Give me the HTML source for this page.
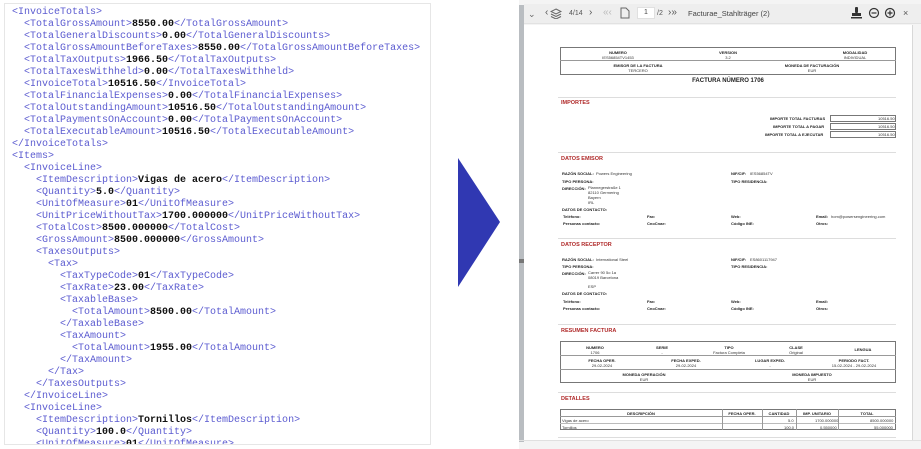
<!DOCTYPE html>
<html><head><meta charset="utf-8"><style>
*{margin:0;padding:0;box-sizing:border-box}
body{width:921px;height:449px;overflow:hidden;background:#fff;position:relative;font-family:"Liberation Sans",sans-serif}
#xml{position:absolute;left:4px;top:3px;width:427px;height:442px;border:1px solid #e6e6e6;overflow:hidden;background:#fff}
#xml pre{position:absolute;left:7px;top:3px;font-family:"Liberation Mono",monospace;font-size:10px;line-height:12px;color:#5b5bd0}
#xml b{color:#111;font-weight:bold}
.a{position:absolute}
.t{position:absolute;font-size:4px;color:#333;white-space:nowrap;line-height:5px}
.l{font-weight:bold;color:#222}
.h{position:absolute;font-size:5.5px;font-weight:bold;color:#b02a2a;left:561px}
.hr{position:absolute;left:558px;width:338px;height:1px;background:#ddd}
.c{text-align:center;transform:translateX(-50%)}
</style></head><body>
<div id="xml"><pre>&lt;InvoiceTotals&gt;
  &lt;TotalGrossAmount&gt;<b>8550.00</b>&lt;/TotalGrossAmount&gt;
  &lt;TotalGeneralDiscounts&gt;<b>0.00</b>&lt;/TotalGeneralDiscounts&gt;
  &lt;TotalGrossAmountBeforeTaxes&gt;<b>8550.00</b>&lt;/TotalGrossAmountBeforeTaxes&gt;
  &lt;TotalTaxOutputs&gt;<b>1966.50</b>&lt;/TotalTaxOutputs&gt;
  &lt;TotalTaxesWithheld&gt;<b>0.00</b>&lt;/TotalTaxesWithheld&gt;
  &lt;InvoiceTotal&gt;<b>10516.50</b>&lt;/InvoiceTotal&gt;
  &lt;TotalFinancialExpenses&gt;<b>0.00</b>&lt;/TotalFinancialExpenses&gt;
  &lt;TotalOutstandingAmount&gt;<b>10516.50</b>&lt;/TotalOutstandingAmount&gt;
  &lt;TotalPaymentsOnAccount&gt;<b>0.00</b>&lt;/TotalPaymentsOnAccount&gt;
  &lt;TotalExecutableAmount&gt;<b>10516.50</b>&lt;/TotalExecutableAmount&gt;
&lt;/InvoiceTotals&gt;
&lt;Items&gt;
  &lt;InvoiceLine&gt;
    &lt;ItemDescription&gt;<b>Vigas de acero</b>&lt;/ItemDescription&gt;
    &lt;Quantity&gt;<b>5.0</b>&lt;/Quantity&gt;
    &lt;UnitOfMeasure&gt;<b>01</b>&lt;/UnitOfMeasure&gt;
    &lt;UnitPriceWithoutTax&gt;<b>1700.000000</b>&lt;/UnitPriceWithoutTax&gt;
    &lt;TotalCost&gt;<b>8500.000000</b>&lt;/TotalCost&gt;
    &lt;GrossAmount&gt;<b>8500.000000</b>&lt;/GrossAmount&gt;
    &lt;TaxesOutputs&gt;
      &lt;Tax&gt;
        &lt;TaxTypeCode&gt;<b>01</b>&lt;/TaxTypeCode&gt;
        &lt;TaxRate&gt;<b>23.00</b>&lt;/TaxRate&gt;
        &lt;TaxableBase&gt;
          &lt;TotalAmount&gt;<b>8500.00</b>&lt;/TotalAmount&gt;
        &lt;/TaxableBase&gt;
        &lt;TaxAmount&gt;
          &lt;TotalAmount&gt;<b>1955.00</b>&lt;/TotalAmount&gt;
        &lt;/TaxAmount&gt;
      &lt;/Tax&gt;
    &lt;/TaxesOutputs&gt;
  &lt;/InvoiceLine&gt;
  &lt;InvoiceLine&gt;
    &lt;ItemDescription&gt;<b>Tornillos</b>&lt;/ItemDescription&gt;
    &lt;Quantity&gt;<b>100.0</b>&lt;/Quantity&gt;
    &lt;UnitOfMeasure&gt;<b>01</b>&lt;/UnitOfMeasure&gt;
</pre></div>

<svg class="a" style="left:456px;top:156px" width="46" height="133"><polygon points="2,2 44,66 2,131" fill="#3038b2"/></svg>

<!-- viewer -->
<div class="a" style="left:519px;top:0;width:402px;height:449px;background:#f4f4f4"></div>
<div class="a" style="left:519px;top:5px;width:5px;height:437px;background:#b9bdc1"></div>
<div class="a" style="left:524px;top:4px;width:397px;height:20px;background:#eeeeee;border-bottom:1px solid #e2e2e2"></div>
<div class="a" style="left:524px;top:25px;width:388px;height:415px;background:#fff"></div>
<div class="a" style="left:912px;top:25px;width:1px;height:415px;background:#d8d8d8"></div>
<div class="a" style="left:519px;top:440px;width:402px;height:1px;background:#e0e0e0"></div>
<div class="a" style="left:519px;top:259px;width:5px;height:4px;background:#777"></div>
<div class="t" style="left:528px;top:9px;font-size:9px;line-height:10px;color:#666">⌄</div>
<div class="t" style="left:545px;top:8px;font-size:10px;line-height:10px;color:#555">‹</div>
<svg class="a" style="left:550px;top:8px" width="12" height="11"><g fill="none" stroke="#666" stroke-width="1"><path d="M6 1L11 3.5 6 6 1 3.5Z"/><path d="M1 6l5 2.5 5-2.5M1 8.5l5 2.5 5-2.5"/></g></svg>
<div class="t" style="left:569px;top:10px;font-size:7px;line-height:8px;color:#555">4/14</div>
<div class="t" style="left:589px;top:8px;font-size:10px;line-height:10px;color:#555">›</div>
<div class="t" style="left:603px;top:8px;font-size:10px;line-height:10px;color:#bbb">«‹</div>
<svg class="a" style="left:620px;top:7px" width="10" height="12"><path d="M1 1h5l3 3v7H1Z" fill="none" stroke="#666"/></svg>
<div class="a" style="left:637px;top:7px;width:18px;height:12px;background:#fff;border:1px solid #e0e0e0;font-size:7px;text-align:center;line-height:10px;color:#444">1</div>
<div class="t" style="left:657px;top:10px;font-size:7px;line-height:8px;color:#555">/2</div>
<div class="t" style="left:668px;top:8px;font-size:10px;line-height:10px;color:#555">›»</div>
<div class="t" style="left:688px;top:9px;font-size:7.5px;line-height:9px;color:#444">Facturae_Stahlträger (2)</div>
<svg class="a" style="left:850px;top:6px" width="14" height="14"><g fill="#333"><rect x="5" y="1" width="3" height="6" rx="1"/><rect x="2" y="7" width="9" height="3"/><rect x="1" y="11" width="11" height="1.5"/></g></svg>
<svg class="a" style="left:868px;top:7px" width="12" height="12"><circle cx="6" cy="6" r="4.5" fill="none" stroke="#333" stroke-width="1.2"/><path d="M3.5 6h5" stroke="#333" stroke-width="1.2"/></svg>
<svg class="a" style="left:884px;top:7px" width="12" height="12"><circle cx="6" cy="6" r="4.5" fill="none" stroke="#333" stroke-width="1.2"/><path d="M3.5 6h5M6 3.5v5" stroke="#333" stroke-width="1.2"/></svg>
<div class="t" style="left:903px;top:8px;font-size:9px;line-height:10px;color:#555">×</div>

<!-- page content -->
<div class="a" style="left:560px;top:47px;width:336px;height:28px;border:1px solid #777"></div>
<div class="a" style="left:560px;top:60px;width:336px;height:1px;background:#999"></div>
<div class="t l c" style="left:618px;top:50px">NUMERO</div><div class="t c" style="left:618px;top:55px">IES56854TV1453</div>
<div class="t l c" style="left:728px;top:50px">VERSION</div><div class="t c" style="left:728px;top:55px">3.2</div>
<div class="t l c" style="left:855px;top:50px">MODALIDAD</div><div class="t c" style="left:855px;top:55px">INDIVIDUAL</div>
<div class="t l c" style="left:638px;top:63px">EMISOR DE LA FACTURA</div><div class="t c" style="left:638px;top:68px">TERCERO</div>
<div class="t l c" style="left:812px;top:63px">MONEDA DE FACTURACIÓN</div><div class="t c" style="left:812px;top:68px">EUR</div>
<div class="t l c" style="left:728px;top:78px;font-size:6px;line-height:7px">FACTURA NÚMERO 1706</div>
<div class="hr" style="top:97px"></div>
<div class="h" style="top:100px">IMPORTES</div>
<div class="t l" style="left:770px;top:116px">IMPORTE TOTAL FACTURAS</div>
<div class="t l" style="left:773px;top:124px">IMPORTE TOTAL A PAGAR</div>
<div class="t l" style="left:765px;top:132px">IMPORTE TOTAL A EJECUTAR</div>
<div class="a" style="left:830px;top:115px;width:66px;height:7px;border:1px solid #777"></div>
<div class="a" style="left:830px;top:123px;width:66px;height:7px;border:1px solid #777"></div>
<div class="a" style="left:830px;top:131px;width:66px;height:7px;border:1px solid #777"></div>
<div class="t" style="left:878px;top:116px">10516.50</div><div class="t" style="left:878px;top:124px">10516.50</div><div class="t" style="left:878px;top:132px">10516.50</div>

<div class="hr" style="top:152px"></div>
<div class="h" style="top:156px">DATOS EMISOR</div>
<div class="t l" style="left:562px;top:171px">RAZÓN SOCIAL:</div><div class="t" style="left:596px;top:171px">Powers Engineering</div>
<div class="t l" style="left:731px;top:171px">NIF/CIF:</div><div class="t" style="left:750px;top:171px">IES56854TV</div>
<div class="t l" style="left:562px;top:179px">TIPO PERSONA:</div><div class="t l" style="left:731px;top:179px">TIPO RESIDENCIA:</div>
<div class="t l" style="left:562px;top:186px">DIRECCIÓN:</div>
<div class="t" style="left:588px;top:185px">Plannegerstraße 1<br>82110 Germering<br>Bayern<br>IRL</div>
<div class="t l" style="left:562px;top:207px">DATOS DE CONTACTO:</div>
<div class="t l" style="left:563px;top:214px">Teléfono:</div><div class="t l" style="left:647px;top:214px">Fax:</div><div class="t l" style="left:731px;top:214px">Web:</div><div class="t l" style="left:816px;top:214px">Email:</div><div class="t" style="left:831px;top:214px">hom@powersengineering.com</div>
<div class="t l" style="left:563px;top:221px">Personas contacto:</div><div class="t l" style="left:647px;top:221px">CnoCnae:</div><div class="t l" style="left:731px;top:221px">Código INE:</div><div class="t l" style="left:816px;top:221px">Otros:</div>

<div class="hr" style="top:238px"></div>
<div class="h" style="top:242px">DATOS RECEPTOR</div>
<div class="t l" style="left:562px;top:257px">RAZÓN SOCIAL:</div><div class="t" style="left:596px;top:257px">International Steel</div>
<div class="t l" style="left:731px;top:257px">NIF/CIF:</div><div class="t" style="left:750px;top:257px">ES8601117947</div>
<div class="t l" style="left:562px;top:264px">TIPO PERSONA:</div><div class="t l" style="left:731px;top:264px">TIPO RESIDENCIA:</div>
<div class="t l" style="left:562px;top:271px">DIRECCIÓN:</div>
<div class="t" style="left:588px;top:270px">Carrer 90 5o 1a<br>08019 Barcelona</div>
<div class="t" style="left:588px;top:284px">ESP</div>
<div class="t l" style="left:562px;top:291px">DATOS DE CONTACTO:</div>
<div class="t l" style="left:563px;top:299px">Teléfono:</div><div class="t l" style="left:647px;top:299px">Fax:</div><div class="t l" style="left:731px;top:299px">Web:</div><div class="t l" style="left:816px;top:299px">Email:</div>
<div class="t l" style="left:563px;top:306px">Personas contacto:</div><div class="t l" style="left:647px;top:306px">CnoCnae:</div><div class="t l" style="left:731px;top:306px">Código INE:</div><div class="t l" style="left:816px;top:306px">Otros:</div>

<div class="hr" style="top:324px"></div>
<div class="h" style="top:328px">RESUMEN FACTURA</div>
<div class="a" style="left:560px;top:341px;width:336px;height:42px;border:1px solid #777"></div>
<div class="a" style="left:560px;top:355px;width:336px;height:1px;background:#999"></div>
<div class="a" style="left:560px;top:369px;width:336px;height:1px;background:#999"></div>
<div class="t l c" style="left:595px;top:345px">NUMERO</div><div class="t c" style="left:595px;top:350px">1706</div>
<div class="t l c" style="left:662px;top:345px">SERIE</div><div class="t c" style="left:662px;top:350px">-</div>
<div class="t l c" style="left:729px;top:345px">TIPO</div><div class="t c" style="left:729px;top:350px">Factura Completa</div>
<div class="t l c" style="left:796px;top:345px">CLASE</div><div class="t c" style="left:796px;top:350px">Original</div>
<div class="t l c" style="left:863px;top:347px">LENGUA</div>
<div class="t l c" style="left:602px;top:358px">FECHA OPER.</div><div class="t c" style="left:602px;top:363px">29-02-2024</div>
<div class="t l c" style="left:686px;top:358px">FECHA EXPED.</div><div class="t c" style="left:686px;top:363px">29-02-2024</div>
<div class="t l c" style="left:770px;top:358px">LUGAR EXPED.</div><div class="t c" style="left:770px;top:363px">-</div>
<div class="t l c" style="left:854px;top:358px">PERIODO FACT.</div><div class="t c" style="left:854px;top:363px">15-02-2024 - 29-02-2024</div>
<div class="t l c" style="left:644px;top:372px">MONEDA OPERACIÓN</div><div class="t c" style="left:644px;top:377px">EUR</div>
<div class="t l c" style="left:812px;top:372px">MONEDA IMPUESTO</div><div class="t c" style="left:812px;top:377px">EUR</div>

<div class="hr" style="top:392px"></div>
<div class="h" style="top:396px">DETALLES</div>
<div class="a" style="left:560px;top:409px;width:336px;height:21px;border:1px solid #777"></div>
<div class="a" style="left:560px;top:416px;width:336px;height:1px;background:#999"></div>
<div class="a" style="left:560px;top:423px;width:336px;height:1px;background:#bbb"></div>
<div class="a" style="left:722px;top:409px;width:1px;height:21px;background:#999"></div>
<div class="a" style="left:762px;top:409px;width:1px;height:21px;background:#999"></div>
<div class="a" style="left:796px;top:409px;width:1px;height:21px;background:#999"></div>
<div class="a" style="left:838px;top:409px;width:1px;height:21px;background:#999"></div>
<div class="t l c" style="left:641px;top:411px">DESCRIPCIÓN</div>
<div class="t l c" style="left:742px;top:411px">FECHA OPER.</div>
<div class="t l c" style="left:779px;top:411px">CANTIDAD</div>
<div class="t l c" style="left:817px;top:411px">IMP. UNITARIO</div>
<div class="t l c" style="left:867px;top:411px">TOTAL</div>
<div class="t" style="left:562px;top:418px">Vigas de acero</div><div class="t" style="left:562px;top:425px">Tornillos</div>
<div class="t" style="left:788px;top:418px">5.0</div><div class="t" style="left:784px;top:425px">100.0</div>
<div class="t" style="left:815px;top:418px">1700.000000</div><div class="t" style="left:820px;top:425px">0.550000</div>
<div class="t" style="left:870px;top:418px">8500.000000</div><div class="t" style="left:874px;top:425px">55.000000</div>
<div class="hr" style="top:437px"></div>
</body></html>
